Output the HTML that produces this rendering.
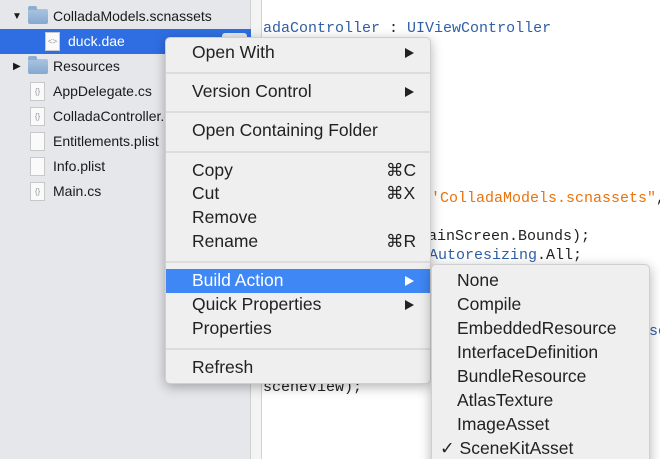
<!DOCTYPE html>
<html style="overflow:hidden"><head><meta charset="utf-8"><style>
*{margin:0;padding:0;box-sizing:border-box}
html,body{width:660px;height:459px;overflow:hidden}
body{position:relative;background:#fff;font-family:"Liberation Sans",sans-serif}
.abs{position:absolute}
#side{left:0;top:0;width:251px;height:459px;background:#e6e7eb;border-right:1px solid #d0d0d0}
#strip{left:251px;top:0;width:11px;height:459px;background:#f4f4f4;border-right:1px solid #d2d2d2}
.row{position:absolute;left:0;width:251px;height:25px;font-size:14px;color:#1a1a1a;line-height:25px}
.row span{position:absolute}
.sel{background:#2f6ee2;color:#fff}
.doc{position:absolute;width:15px;height:19px;background:#fafafa;border:1px solid #c8c8c8;top:3px;font-size:8px;color:#999;text-align:center;line-height:17px}
.fold{position:absolute;width:20px;height:15px;top:5px;background:linear-gradient(#a9c4e0,#86a8cf);border-radius:2px}
.fold:before{content:"";position:absolute;left:0;top:-3px;width:9px;height:4px;background:#8eaed3;border-radius:2px 2px 0 0}
.code{position:absolute;font-family:"Liberation Mono",monospace;font-size:15px;color:#222;white-space:pre}
#menu{left:165px;top:37px;width:266px;height:347px;background:#efefef;border-radius:5px;box-shadow:0 3px 12px rgba(0,0,0,.3);border:1px solid #cfcfcf}
.mi{position:absolute;left:0;width:264px;height:24px;font-size:17.5px;color:#222;line-height:23px;padding-left:26px}
.mi .ar{position:absolute;left:239px;top:7px;width:0;height:0;border-left:9px solid #222;border-top:5px solid transparent;border-bottom:5px solid transparent}
.mi .sc{position:absolute;left:220px}
.sep{position:absolute;left:0;width:264px;height:2px;background:#dcdcdc}
.hl{background:#3e87f5;color:#fff}
.hl .ar{border-left-color:#fff}
#sub{left:431px;top:264px;width:219px;height:205px;background:#efefef;border-radius:5px;box-shadow:0 3px 12px rgba(0,0,0,.3);border:1px solid #cfcfcf}
.si{position:absolute;left:25px;font-size:17.5px;color:#222;line-height:23px;white-space:nowrap}
</style></head><body>
<div id="side" class="abs"></div>
<div id="strip" class="abs"></div>
<div class="row" style="top:4px"><span style="left:12px;top:0;font-size:10px">▼</span><div class="fold" style="left:28px"></div><span style="left:53px">ColladaModels.scnassets</span></div>
<div class="row sel" style="top:29px"><div class="doc" style="left:45px">&lt;&gt;</div><span style="left:68px">duck.dae</span><div class="abs" style="left:222px;top:4px;width:25px;height:16px;background:#e8e8e8;border-radius:3px"></div></div>
<div class="row" style="top:54px"><span style="left:13px;font-size:10px">▶</span><div class="fold" style="left:28px"></div><span style="left:53px">Resources</span></div>
<div class="row" style="top:79px"><div class="doc" style="left:30px">{}</div><span style="left:53px">AppDelegate.cs</span></div>
<div class="row" style="top:104px"><div class="doc" style="left:30px">{}</div><span style="left:53px">ColladaController.cs</span></div>
<div class="row" style="top:129px"><div class="doc" style="left:30px"></div><span style="left:53px">Entitlements.plist</span></div>
<div class="row" style="top:154px"><div class="doc" style="left:30px"></div><span style="left:53px">Info.plist</span></div>
<div class="row" style="top:179px"><div class="doc" style="left:30px">{}</div><span style="left:53px">Main.cs</span></div>

<div class="code" style="left:263px;top:20px;color:#2f5fa6">adaController <span style="color:#222">:</span> UIViewController</div>
<div class="code" style="left:431px;top:190px;color:#e9730d">'ColladaModels.scnassets"<span style="color:#222">,</span></div>
<div class="code" style="left:428px;top:228px">ainScreen.Bounds);</div>
<div class="code" style="left:429px;top:247px"><span style="color:#2f5fa6">Autoresizing</span>.All;</div>
<div class="code" style="left:649px;top:323px;color:#2f5fa6">sc</div>
<div class="code" style="left:263px;top:379px">sceneView);</div>

<div id="menu" class="abs">
<div class="mi" style="top:3px">Open With<div class="ar"></div></div>
<div class="sep" style="top:34px"></div>
<div class="mi" style="top:42px">Version Control<div class="ar"></div></div>
<div class="sep" style="top:73px"></div>
<div class="mi" style="top:81px">Open Containing Folder</div>
<div class="sep" style="top:113px"></div>
<div class="mi" style="top:121px">Copy<span class="sc">⌘C</span></div>
<div class="mi" style="top:144px">Cut<span class="sc">⌘X</span></div>
<div class="mi" style="top:168px">Remove</div>
<div class="mi" style="top:192px">Rename<span class="sc">⌘R</span></div>
<div class="sep" style="top:223px"></div>
<div class="mi hl" style="top:231px">Build Action<div class="ar"></div></div>
<div class="mi" style="top:255px">Quick Properties<div class="ar"></div></div>
<div class="mi" style="top:279px">Properties</div>
<div class="sep" style="top:310px"></div>
<div class="mi" style="top:318px">Refresh</div>
</div>

<div id="sub" class="abs">
<div class="si" style="top:4px">None</div>
<div class="si" style="top:28px">Compile</div>
<div class="si" style="top:52px">EmbeddedResource</div>
<div class="si" style="top:76px">InterfaceDefinition</div>
<div class="si" style="top:100px">BundleResource</div>
<div class="si" style="top:124px">AtlasTexture</div>
<div class="si" style="top:148px">ImageAsset</div>
<div class="si" style="top:172px;left:8px">✓ SceneKitAsset</div>
</div>
</body></html>
